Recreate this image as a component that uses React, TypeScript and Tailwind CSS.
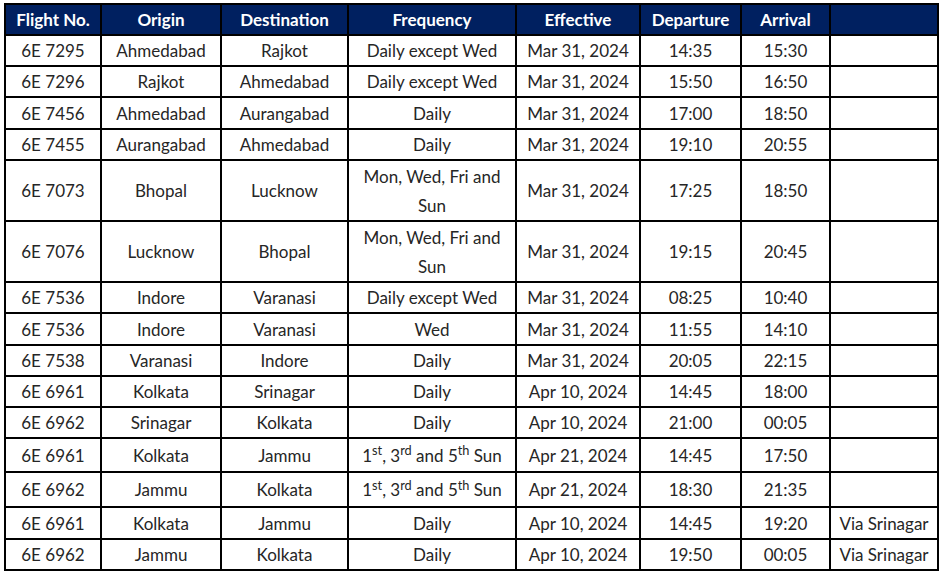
import React from 'react';

type Row = {
  no: string;
  from: string;
  to: string;
  freq: React.ReactNode;
  eff: string;
  dep: string;
  arr: string;
  note?: string;
  h: string;
};

const sundays = (
  <>
    1<sup>st</sup>, 3<sup>rd</sup> and 5<sup>th</sup> Sun
  </>
);

const monWedFri = (
  <>
    Mon, Wed, Fri and
    <br />
    Sun
  </>
);

// row heights follow the source sheet, which is not perfectly even
const rows: Row[] = [
  { no: '6E 7295', from: 'Ahmedabad', to: 'Rajkot', freq: 'Daily except Wed', eff: 'Mar 31, 2024', dep: '14:35', arr: '15:30', h: 'h-[31px]' },
  { no: '6E 7296', from: 'Rajkot', to: 'Ahmedabad', freq: 'Daily except Wed', eff: 'Mar 31, 2024', dep: '15:50', arr: '16:50', h: 'h-[31px]' },
  { no: '6E 7456', from: 'Ahmedabad', to: 'Aurangabad', freq: 'Daily', eff: 'Mar 31, 2024', dep: '17:00', arr: '18:50', h: 'h-[32px]' },
  { no: '6E 7455', from: 'Aurangabad', to: 'Ahmedabad', freq: 'Daily', eff: 'Mar 31, 2024', dep: '19:10', arr: '20:55', h: 'h-[31px]' },
  { no: '6E 7073', from: 'Bhopal', to: 'Lucknow', freq: monWedFri, eff: 'Mar 31, 2024', dep: '17:25', arr: '18:50', h: 'h-[61px]' },
  { no: '6E 7076', from: 'Lucknow', to: 'Bhopal', freq: monWedFri, eff: 'Mar 31, 2024', dep: '19:15', arr: '20:45', h: 'h-[61px]' },
  { no: '6E 7536', from: 'Indore', to: 'Varanasi', freq: 'Daily except Wed', eff: 'Mar 31, 2024', dep: '08:25', arr: '10:40', h: 'h-[31px]' },
  { no: '6E 7536', from: 'Indore', to: 'Varanasi', freq: 'Wed', eff: 'Mar 31, 2024', dep: '11:55', arr: '14:10', h: 'h-[32px]' },
  { no: '6E 7538', from: 'Varanasi', to: 'Indore', freq: 'Daily', eff: 'Mar 31, 2024', dep: '20:05', arr: '22:15', h: 'h-[31px]' },
  { no: '6E 6961', from: 'Kolkata', to: 'Srinagar', freq: 'Daily', eff: 'Apr 10, 2024', dep: '14:45', arr: '18:00', h: 'h-[31px]' },
  { no: '6E 6962', from: 'Srinagar', to: 'Kolkata', freq: 'Daily', eff: 'Apr 10, 2024', dep: '21:00', arr: '00:05', h: 'h-[31px]' },
  { no: '6E 6961', from: 'Kolkata', to: 'Jammu', freq: sundays, eff: 'Apr 21, 2024', dep: '14:45', arr: '17:50', h: 'h-[34px]' },
  { no: '6E 6962', from: 'Jammu', to: 'Kolkata', freq: sundays, eff: 'Apr 21, 2024', dep: '18:30', arr: '21:35', h: 'h-[35px]' },
  { no: '6E 6961', from: 'Kolkata', to: 'Jammu', freq: 'Daily', eff: 'Apr 10, 2024', dep: '14:45', arr: '19:20', note: 'Via Srinagar', h: 'h-[32px]' },
  { no: '6E 6962', from: 'Jammu', to: 'Kolkata', freq: 'Daily', eff: 'Apr 10, 2024', dep: '19:50', arr: '00:05', note: 'Via Srinagar', h: 'h-[31px]' },
];

const headers = ['Flight No.', 'Origin', 'Destination', 'Frequency', 'Effective', 'Departure', 'Arrival', ''];

export default function App() {
  return (
    <div className="min-h-screen bg-white pl-[4px] pt-[3px]" style={{ fontFamily: 'Lato, "Open Sans", sans-serif' }}>
      <table className="w-[933px] table-fixed border-collapse border-2 border-black text-[17px] text-[#262626]">
        <colgroup>
          <col className="w-[96px]" />
          <col className="w-[120px]" />
          <col className="w-[127px]" />
          <col className="w-[168px]" />
          <col className="w-[124px]" />
          <col className="w-[101px]" />
          <col className="w-[89px]" />
          <col className="w-[108px]" />
        </colgroup>
        <thead>
          <tr className="h-[31px] bg-[#002060]">
            {headers.map((h, i) => (
              <th key={i} className="border-2 border-black p-0 text-center font-bold leading-[28px] text-white">
                {h}
              </th>
            ))}
          </tr>
        </thead>
        <tbody>
          {rows.map((r, i) => (
            <tr key={i} className={r.h}>
              {[r.no, r.from, r.to, r.freq, r.eff, r.dep, r.arr, r.note ?? ''].map((c, j) => (
                <td key={j} className="whitespace-nowrap border-2 border-black p-0 text-center leading-[29px]">
                  {c}
                </td>
              ))}
            </tr>
          ))}
        </tbody>
      </table>
    </div>
  );
}
